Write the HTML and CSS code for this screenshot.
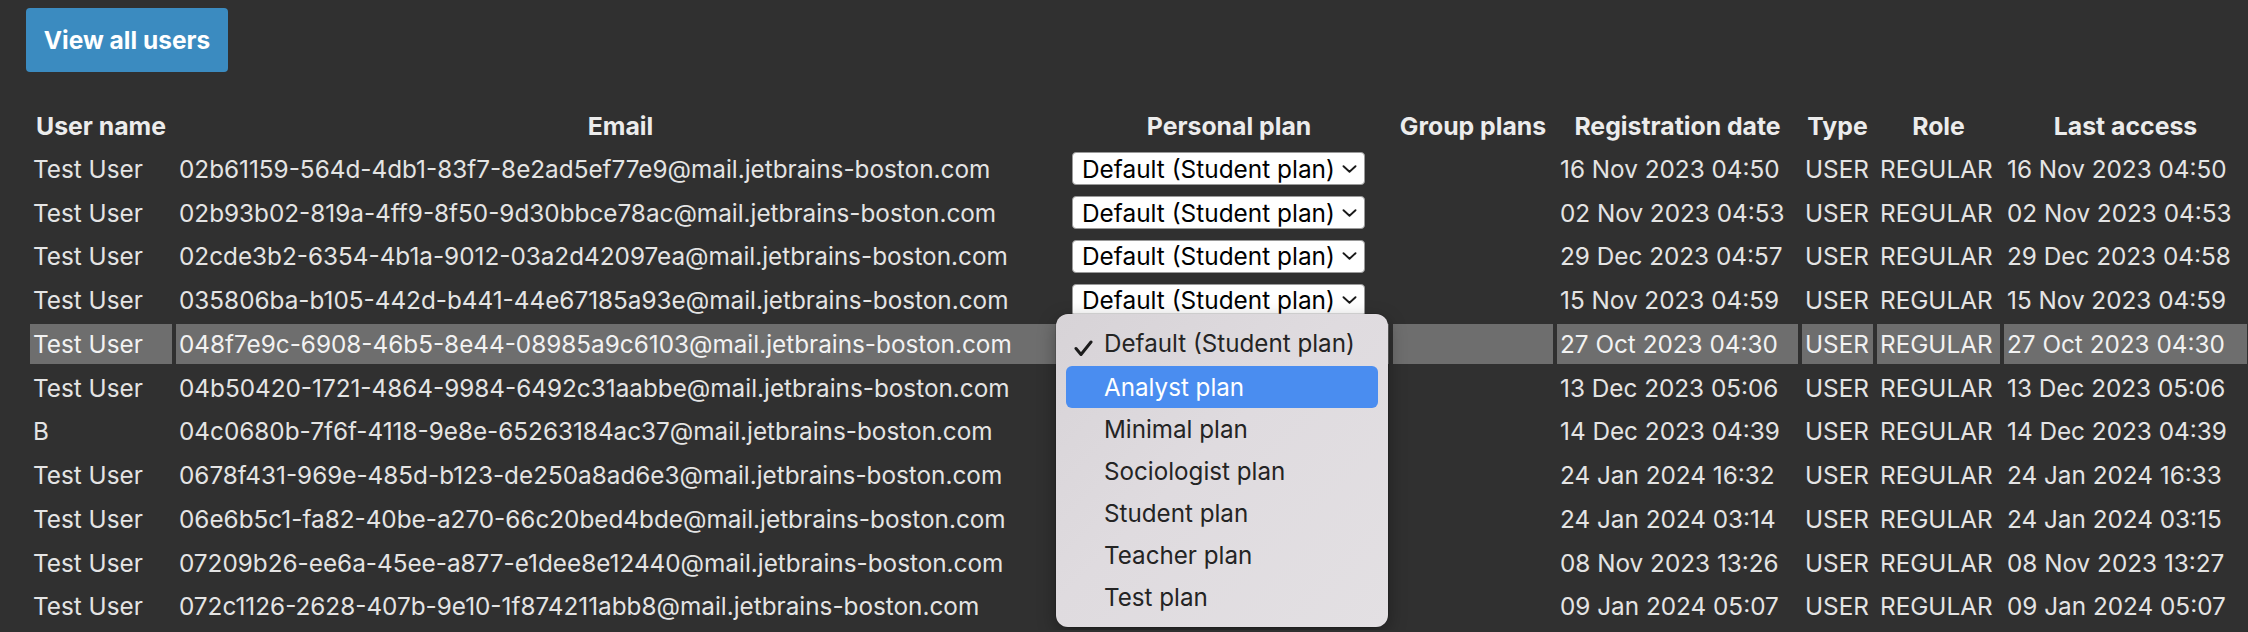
FILE: index.html
```html
<!DOCTYPE html>
<html lang="en">
<head>
<meta charset="utf-8">
<title>Users</title>
<link rel="stylesheet" href="styles.css">
</head>
<body>
<div class="page">
  <div class="toolbar">
    <button class="btn-primary" type="button">View all users</button>
  </div>

  <table class="users">
    <thead>
      <tr>
        <th class="c-name">User name</th>
        <th class="c-email">Email</th>
        <th class="c-plan">Personal plan</th>
        <th class="c-group">Group plans</th>
        <th class="c-reg">Registration date</th>
        <th class="c-type">Type</th>
        <th class="c-role">Role</th>
        <th class="c-last">Last access</th>
      </tr>
    </thead>
    <tbody>
      <tr>
        <td>Test User</td><td>02b61159-564d-4db1-83f7-8e2ad5ef77e9@mail.jetbrains-boston.com</td>
        <td><div class="select"><span>Default (Student plan)</span><svg class="chev" viewBox="0 0 15 8"><path d="M1.5 1.2L7.5 6.8 13.5 1.2"/></svg></div></td>
        <td></td><td>16 Nov 2023 04:50</td><td>USER</td><td>REGULAR</td><td>16 Nov 2023 04:50</td>
      </tr>
      <tr>
        <td>Test User</td><td>02b93b02-819a-4ff9-8f50-9d30bbce78ac@mail.jetbrains-boston.com</td>
        <td><div class="select"><span>Default (Student plan)</span><svg class="chev" viewBox="0 0 15 8"><path d="M1.5 1.2L7.5 6.8 13.5 1.2"/></svg></div></td>
        <td></td><td>02 Nov 2023 04:53</td><td>USER</td><td>REGULAR</td><td>02 Nov 2023 04:53</td>
      </tr>
      <tr>
        <td>Test User</td><td>02cde3b2-6354-4b1a-9012-03a2d42097ea@mail.jetbrains-boston.com</td>
        <td><div class="select"><span>Default (Student plan)</span><svg class="chev" viewBox="0 0 15 8"><path d="M1.5 1.2L7.5 6.8 13.5 1.2"/></svg></div></td>
        <td></td><td>29 Dec 2023 04:57</td><td>USER</td><td>REGULAR</td><td>29 Dec 2023 04:58</td>
      </tr>
      <tr>
        <td>Test User</td><td>035806ba-b105-442d-b441-44e67185a93e@mail.jetbrains-boston.com</td>
        <td><div class="select"><span>Default (Student plan)</span><svg class="chev" viewBox="0 0 15 8"><path d="M1.5 1.2L7.5 6.8 13.5 1.2"/></svg></div></td>
        <td></td><td>15 Nov 2023 04:59</td><td>USER</td><td>REGULAR</td><td>15 Nov 2023 04:59</td>
      </tr>
      <tr class="is-hover">
        <td>Test User</td><td>048f7e9c-6908-46b5-8e44-08985a9c6103@mail.jetbrains-boston.com</td>
        <td><div class="select"><span>Default (Student plan)</span><svg class="chev" viewBox="0 0 15 8"><path d="M1.5 1.2L7.5 6.8 13.5 1.2"/></svg></div></td>
        <td></td><td>27 Oct 2023 04:30</td><td>USER</td><td>REGULAR</td><td>27 Oct 2023 04:30</td>
      </tr>
      <tr>
        <td>Test User</td><td>04b50420-1721-4864-9984-6492c31aabbe@mail.jetbrains-boston.com</td>
        <td><div class="select"><span>Default (Student plan)</span><svg class="chev" viewBox="0 0 15 8"><path d="M1.5 1.2L7.5 6.8 13.5 1.2"/></svg></div></td>
        <td></td><td>13 Dec 2023 05:06</td><td>USER</td><td>REGULAR</td><td>13 Dec 2023 05:06</td>
      </tr>
      <tr>
        <td>B</td><td>04c0680b-7f6f-4118-9e8e-65263184ac37@mail.jetbrains-boston.com</td>
        <td><div class="select"><span>Default (Student plan)</span><svg class="chev" viewBox="0 0 15 8"><path d="M1.5 1.2L7.5 6.8 13.5 1.2"/></svg></div></td>
        <td></td><td>14 Dec 2023 04:39</td><td>USER</td><td>REGULAR</td><td>14 Dec 2023 04:39</td>
      </tr>
      <tr>
        <td>Test User</td><td>0678f431-969e-485d-b123-de250a8ad6e3@mail.jetbrains-boston.com</td>
        <td><div class="select"><span>Default (Student plan)</span><svg class="chev" viewBox="0 0 15 8"><path d="M1.5 1.2L7.5 6.8 13.5 1.2"/></svg></div></td>
        <td></td><td>24 Jan 2024 16:32</td><td>USER</td><td>REGULAR</td><td>24 Jan 2024 16:33</td>
      </tr>
      <tr>
        <td>Test User</td><td>06e6b5c1-fa82-40be-a270-66c20bed4bde@mail.jetbrains-boston.com</td>
        <td><div class="select"><span>Default (Student plan)</span><svg class="chev" viewBox="0 0 15 8"><path d="M1.5 1.2L7.5 6.8 13.5 1.2"/></svg></div></td>
        <td></td><td>24 Jan 2024 03:14</td><td>USER</td><td>REGULAR</td><td>24 Jan 2024 03:15</td>
      </tr>
      <tr>
        <td>Test User</td><td>07209b26-ee6a-45ee-a877-e1dee8e12440@mail.jetbrains-boston.com</td>
        <td><div class="select"><span>Default (Student plan)</span><svg class="chev" viewBox="0 0 15 8"><path d="M1.5 1.2L7.5 6.8 13.5 1.2"/></svg></div></td>
        <td></td><td>08 Nov 2023 13:26</td><td>USER</td><td>REGULAR</td><td>08 Nov 2023 13:27</td>
      </tr>
      <tr>
        <td>Test User</td><td>072c1126-2628-407b-9e10-1f874211abb8@mail.jetbrains-boston.com</td>
        <td><div class="select"><span>Default (Student plan)</span><svg class="chev" viewBox="0 0 15 8"><path d="M1.5 1.2L7.5 6.8 13.5 1.2"/></svg></div></td>
        <td></td><td>09 Jan 2024 05:07</td><td>USER</td><td>REGULAR</td><td>09 Jan 2024 05:07</td>
      </tr>
    </tbody>
  </table>

  <ul class="menu" role="listbox">
    <li class="menu-item is-checked"><svg class="check" viewBox="0 0 19 16"><path d="M2 8.5l5 6 10-12.5"/></svg>Default (Student plan)</li>
    <li class="menu-item is-active">Analyst plan</li>
    <li class="menu-item">Minimal plan</li>
    <li class="menu-item">Sociologist plan</li>
    <li class="menu-item">Student plan</li>
    <li class="menu-item">Teacher plan</li>
    <li class="menu-item">Test plan</li>
  </ul>
</div>
</body>
</html>
```
FILE: styles.css
```css
html, body {
  margin: 0;
  padding: 0;
  background: #303030;
  overflow: hidden;
}

.page {
  position: relative;
  padding: 8px 0 0 26px;
  font-family: "Inter", "Liberation Sans", sans-serif;
  color: #e4e4e4;
}

.toolbar {
  display: flex;
}

.btn-primary {
  width: 202px;
  height: 64px;
  border: 0;
  border-radius: 4px;
  background: #3b8bc0;
  color: #ffffff;
  font-family: "Inter", "Liberation Sans", sans-serif;
  font-weight: 700;
  font-size: 24.5px;
  padding: 0;
  cursor: pointer;
}

.users {
  margin-top: 31px;
  border-collapse: separate;
  border-spacing: 4px;
  table-layout: fixed;
  width: 2225px;
}

.users th,
.users td {
  box-sizing: border-box;
  padding: 0 3px;
  white-space: nowrap;
  vertical-align: middle;
}

.users th {
  height: 38px;
  font-weight: 700;
  font-size: 24.8px;
  color: #ececec;
  text-align: center;
}

.users td {
  height: 39.75px;
  font-size: 24.3px;
  text-align: left;
}

.c-name  { width: 142px; }
.c-email { width: 889px; }
.c-plan  { width: 320px; }
.c-group { width: 160px; }
.c-reg   { width: 241px; }
.c-type  { width: 71px; }
.c-role  { width: 123px; }
.c-last  { width: 243px; }

.users tr.is-hover td {
  background: #6e6e6e;
  color: #f2f2f2;
}

.select {
  box-sizing: border-box;
  width: 293px;
  height: 33px;
  display: flex;
  align-items: center;
  justify-content: space-between;
  padding: 0 7px 0 9px;
  background: #ffffff;
  border: 1px solid #9a9a9a;
  border-radius: 4px;
  color: #000000;
  font-size: 24.4px;
}

.chev {
  width: 15px;
  height: 8px;
  fill: none;
  stroke: #1a1a1a;
  stroke-width: 1.9;
  stroke-linecap: round;
  stroke-linejoin: round;
}

.menu {
  position: absolute;
  left: 1056px;
  top: 314px;
  box-sizing: border-box;
  width: 332px;
  height: 313px;
  margin: 0;
  padding: 8px 0 9px;
  list-style: none;
  border-radius: 12px;
  background: linear-gradient(135deg, #d7d3d7 0%, #dfdbdf 45%, #e3e0e3 100%);
  box-shadow: 0 6px 18px rgba(0, 0, 0, 0.35), 0 0 0 0.5px rgba(0, 0, 0, 0.25);
  font-size: 24.2px;
  color: #242424;
}

.menu-item {
  position: relative;
  box-sizing: border-box;
  height: 42px;
  margin: 0 10px;
  padding: 1px 0 0 38px;
  line-height: 41px;
  border-radius: 6px;
  white-space: nowrap;
}

.menu-item.is-checked {
  margin-bottom: 2px;
}

.menu-item.is-active {
  background: #4a8df0;
  color: #ffffff;
}

.check {
  position: absolute;
  left: 8px;
  top: 18px;
  width: 19px;
  height: 16px;
  fill: none;
  stroke: #1c1c1c;
  stroke-width: 3;
  stroke-linecap: round;
  stroke-linejoin: round;
}
```
